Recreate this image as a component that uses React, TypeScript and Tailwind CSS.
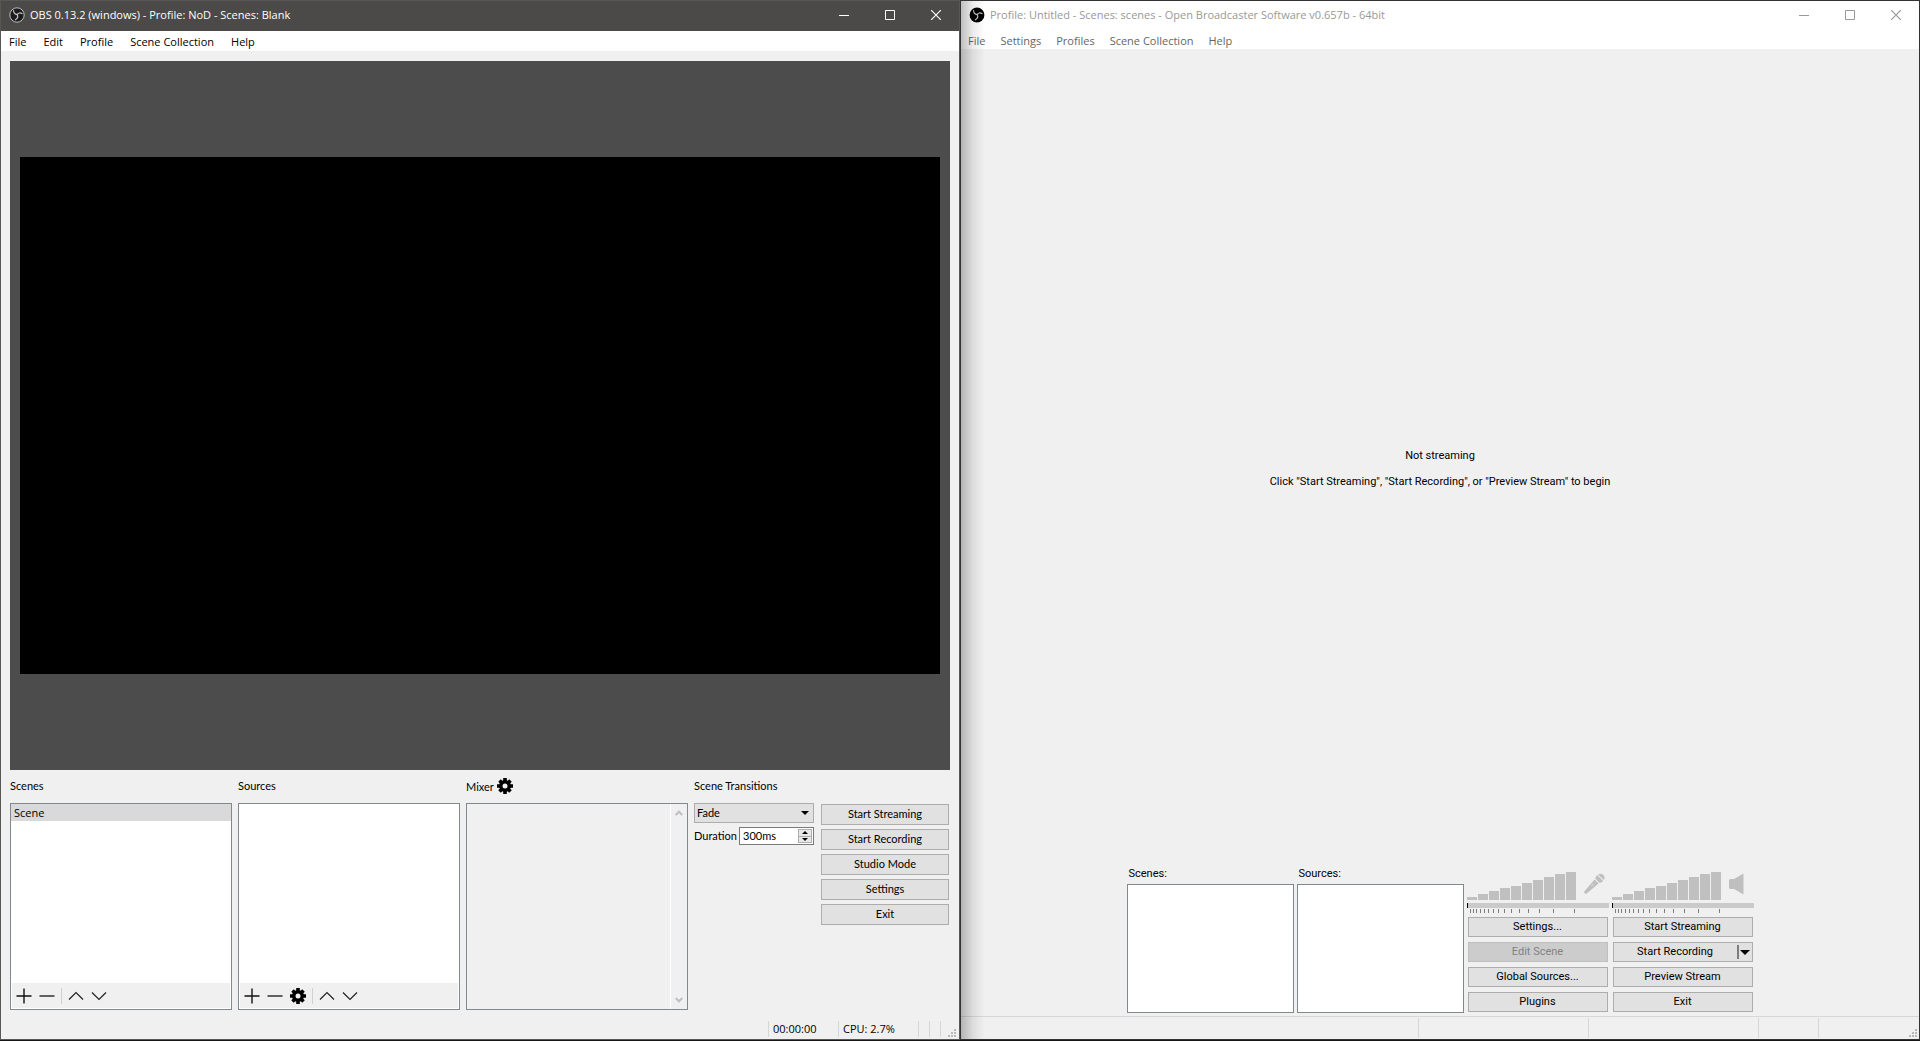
import React, { useState } from "react";
import clsx from "clsx";

const METER_BARS = [3, 6, 9, 12, 14, 17, 20, 23, 26, 28];
const METER_TICKS = [3, 6, 9, 13, 17, 21, 26, 31, 37, 44, 52, 61, 72, 86, 107];

/* ---------- icons ---------- */

const ObsLogo: React.FC<{ ring?: boolean }> = ({ ring }) => (
  <svg viewBox="0 0 16 16" className="size-4 shrink-0">
    <circle cx="8" cy="8" r="7.4" fill={ring ? "#1c1c1e" : "#000"} />
    {ring && (
      <circle cx="8" cy="8" r="7.2" fill="none" stroke="#c4c4c4" strokeWidth="1" />
    )}
    <g fill="none" stroke="#c4c4c4" strokeWidth="1.2" strokeLinecap="round">
      <path d="M8.2 7.6C6.2 7.4 4.6 6 4.6 3.6" />
      <path d="M8.2 7.6C9.2 5.8 11.2 5.4 13 6.6" />
      <path d="M8.2 7.6C9.2 9.6 8.6 11.6 6.4 12.8" />
    </g>
  </svg>
);

const GearIcon: React.FC = () => (
  <svg viewBox="0 0 16 16" className="size-4 shrink-0">
    <g stroke="#000" strokeWidth="3.6">
      <path d="M8 0v16M0 8h16" />
      <path d="M2.5 2.5l11 11M13.5 2.5l-11 11" />
    </g>
    <circle cx="8" cy="8" r="6" />
    <circle cx="8" cy="8" r="2.5" fill="#f0f0f0" />
  </svg>
);

const PlusIcon: React.FC = () => (
  <svg viewBox="0 0 16 16" className="size-4" stroke="#111" strokeWidth="1.4">
    <path d="M8 0.5v15M0.5 8h15" />
  </svg>
);

const MinusIcon: React.FC = () => (
  <svg viewBox="0 0 16 16" className="size-4" stroke="#222" strokeWidth="1.4">
    <path d="M0.5 8h15" />
  </svg>
);

const ChevronIcon: React.FC<{ down?: boolean }> = ({ down }) => (
  <svg viewBox="0 0 16 16" className="size-4" fill="none" stroke="#222" strokeWidth="1.2">
    <path d={down ? "M1 4.5l7 7 7-7" : "M1 11.5l7-7 7 7"} />
  </svg>
);

const ScrollArrow: React.FC<{ down?: boolean }> = ({ down }) => (
  <svg viewBox="0 0 8 8" className="size-2" fill="none" stroke="#bfbfbf" strokeWidth="2">
    <path d={down ? "M0.7 2l3.3 3.3L7.3 2" : "M0.7 6l3.3-3.3L7.3 6"} />
  </svg>
);

const Triangle: React.FC<{ up?: boolean; className: string }> = ({ up, className }) => (
  <svg viewBox="0 0 8 4" className={className}>
    <path d={up ? "M0 4L4 0l4 4z" : "M0 0h8L4 4z"} />
  </svg>
);

const MicIcon: React.FC = () => (
  <svg viewBox="0 0 21 21" className="size-[21px]" fill="#bfbfbf">
    <path d="M10.6 6.4l4 4.2L2.4 20.8 0.4 20.6 0.2 18.4z" />
    <path d="M11.4 5.8c0-1.500.7-2.800 1.800-3.800l6 6c-1.100 1.200-2.400 1.800-3.900 1.800z" />
    <path d="M14 1.400c1.800-1.200 4-.9 5.400.5s1.700 3.500.5 5.200z" />
    <path d="M7.600 12.800l1.400-1.500" stroke="#efefef" strokeWidth="1" />
  </svg>
);

const SpeakerIcon: React.FC = () => (
  <svg viewBox="0 0 15 22" className="h-[22px] w-[15px]" fill="#bfbfbf">
    <path d="M0 7.500Q0 6 1.500 6H5L14.500 0.500V21.500L5 16H1.500Q0 16 0 14.500z" />
  </svg>
);

const SizeGrip: React.FC = () => (
  <svg viewBox="0 0 8 8" className="size-2" fill="#b9b9b9">
    <path d="M6 0h2v2H6zM3 3h2v2H3zM6 3h2v2H6zM0 6h2v2H0zM3 6h2v2H3zM6 6h2v2H6z" />
  </svg>
);

/* ---------- window parts ---------- */

const WindowButtons: React.FC = () => (
  <div className="ml-auto flex self-stretch">
    <button aria-label="Minimize" className="flex w-[46px] items-center justify-center">
      <svg viewBox="0 0 10 10" className="size-2.5" stroke="currentColor">
        <path d="M0 5.500h10" />
      </svg>
    </button>
    <button aria-label="Maximize" className="flex w-[46px] items-center justify-center">
      <svg viewBox="0 0 10 10" className="size-2.5" fill="none" stroke="currentColor">
        <path d="M.5.500h9v9h-9z" />
      </svg>
    </button>
    <button aria-label="Close" className="flex w-[46px] items-center justify-center">
      <svg viewBox="0 0 10 10" className="size-2.5" stroke="currentColor" strokeWidth="1.200">
        <path d="M0 0l10 10M10 0L0 10" />
      </svg>
    </button>
  </div>
);

const PushButton: React.FC<{
  children: React.ReactNode;
  className?: string;
  disabled?: boolean;
}> = ({ children, className, disabled }) => (
  <button
    disabled={disabled}
    className={clsx(
      "flex w-full items-center justify-center border",
      disabled
        ? "border-[#bfbfbf] bg-[#cccccc] text-[#838383]"
        : "border-[#adadad] bg-[#e1e1e1] text-black",
      className
    )}
  >
    {children}
  </button>
);

const ListToolbar: React.FC<{ name: string; withGear?: boolean }> = ({ name, withGear }) => (
  <div className="m-px flex h-[25px] items-center gap-[7px] bg-[#f0f0f0] pl-1">
    <button aria-label={`Add ${name}`}>
      <PlusIcon />
    </button>
    <button aria-label={`Remove ${name}`}>
      <MinusIcon />
    </button>
    {withGear && (
      <button aria-label={`${name} properties`}>
        <GearIcon />
      </button>
    )}
    <span className="-mx-px h-4 w-px bg-[#d0d0d0]" />
    <button aria-label={`Move ${name} up`}>
      <ChevronIcon />
    </button>
    <button aria-label={`Move ${name} down`}>
      <ChevronIcon down />
    </button>
  </div>
);

const StudioWindow: React.FC = () => {
  const [duration, setDuration] = useState(300);

  return (
    <section className="flex min-w-0 flex-col border border-[#575757] bg-[#f0f0f0] text-black">
      <header className="flex h-[30px] items-center gap-[5px] bg-[#4b4a48] pb-0.5 pl-2 font-['Open_Sans',sans-serif] text-[11px] text-white">
        <ObsLogo ring />
        <h1>OBS 0.13.2 (windows) - Profile: NoD - Scenes: Blank</h1>
        <WindowButtons />
      </header>
      <nav className="flex h-5 items-center gap-[17px] bg-white pt-0.5 pl-2 font-['Open_Sans',sans-serif] text-[11px]">
        {["File", "Edit", "Profile", "Scene Collection", "Help"].map((item) => (
          <button key={item}>{item}</button>
        ))}
      </nav>

      <main className="flex flex-1 flex-col px-[9px] pt-2.5 font-[Lato,sans-serif] text-[11px]">
        {/* Preview */}
        <div className="flex flex-1 items-center bg-[#4c4c4c] px-2.5">
          <div className="aspect-video w-full bg-black" />
        </div>

        <div className="flex gap-1.5 pr-px">
          <div className="flex flex-1 flex-col">
            <h2 className="flex h-[33px] items-center">Scenes</h2>
            <div className="flex h-[207px] flex-col border border-[#828790] bg-white">
              <ul className="flex-1">
                <li className="h-[17px] bg-[#d9d9d9] pl-[3px] font-['Open_Sans',sans-serif] leading-[17px]">
                  Scene
                </li>
              </ul>
              <ListToolbar name="scene" />
            </div>
          </div>

          <div className="flex flex-1 flex-col">
            <h2 className="flex h-[33px] items-center">Sources</h2>
            <div className="flex h-[207px] flex-col border border-[#828790] bg-white">
              <ul className="flex-1" />
              <ListToolbar name="source" withGear />
            </div>
          </div>

          <div className="flex flex-1 flex-col">
            <div className="flex h-[33px] items-start gap-[3px]">
              <h2 className="leading-[33px]">Mixer</h2>
              <button aria-label="Mixer settings" className="pt-2">
                <GearIcon />
              </button>
            </div>
            <div className="flex h-[207px] justify-end border border-[#828790]">
              <div className="flex w-[17px] flex-col items-center justify-between border-l border-white py-[5px]">
                <ScrollArrow />
                <ScrollArrow down />
              </div>
            </div>
          </div>

          <div className="w-[120px]">
            <h2 className="flex h-[33px] items-center">Scene Transitions</h2>
            <div className="relative">
              <select
                aria-label="Scene transition"
                className="block h-5 w-full appearance-none border border-[#adadad] bg-[#e1e1e1] pl-0.5"
              >
                <option>Fade</option>
                <option>Cut</option>
              </select>
              <Triangle className="pointer-events-none absolute top-2 right-[5px] h-1 w-2" />
            </div>
            <div className="mt-1 flex items-center justify-between">
              <label htmlFor="duration">Duration</label>
              <div className="flex h-[18px] w-[75px] border border-[#7a7a7a] bg-white p-px">
                <input
                  id="duration"
                  value={`${duration}ms`}
                  onChange={(e) => setDuration(parseInt(e.target.value) || 0)}
                  className="w-0 flex-1 pl-0.5 outline-none"
                />
                <div className="flex w-3.5 flex-col border border-[#adadad] bg-[#e8e8e8]">
                  <button
                    aria-label="Increase duration"
                    onClick={() => setDuration(duration + 50)}
                    className="flex flex-1 items-center justify-center border-b border-[#adadad]"
                  >
                    <Triangle up className="h-[3px] w-1.5" />
                  </button>
                  <button
                    aria-label="Decrease duration"
                    onClick={() => setDuration(Math.max(0, duration - 50))}
                    className="flex flex-1 items-center justify-center"
                  >
                    <Triangle className="h-[3px] w-1.5" />
                  </button>
                </div>
              </div>
            </div>
          </div>

          <div className="ml-px flex w-[128px] flex-col gap-1 pt-[34px]">
            {["Start Streaming", "Start Recording", "Studio Mode", "Settings", "Exit"].map(
              (label) => (
                <PushButton key={label} className="h-[21px]">
                  {label}
                </PushButton>
              )
            )}
          </div>
        </div>
      </main>

      <footer className="flex h-[29px] items-center justify-end pt-2 pr-[3px] font-['Open_Sans',sans-serif] text-[11px]">
        <span className="h-4 w-[70px] border-l border-[#d7d7d7] pl-1 leading-4">00:00:00</span>
        <span className="h-4 w-20 border-l border-[#d7d7d7] pl-1 leading-4">CPU: 2.7%</span>
        <span className="h-4 w-[11px] border-l border-[#d7d7d7]" />
        <span className="h-4 w-[11px] border-l border-[#d7d7d7]" />
        <span className="h-4 w-2 border-l border-[#d7d7d7]" />
        <span className="self-end pb-0.5">
          <SizeGrip />
        </span>
      </footer>
    </section>
  );
};

const VolumeMeter: React.FC<{ label: string; icon: React.ReactNode }> = ({ label, icon }) => (
  <div className="h-[45px] w-[142px]">
    <div className="flex h-7 justify-between">
      <div className="flex items-end gap-px">
        {METER_BARS.map((height) => (
          <span key={height} className="w-2.5 bg-[#c0c0c0]" style={{ height }} />
        ))}
      </div>
      <button aria-label={label} className="flex w-[34px] justify-start pt-px pl-2">
        {icon}
      </button>
    </div>
    <div className="mt-[3px] h-[5px] border-l border-black bg-[#cacaca]" />
    <svg viewBox="0 0 142 5" className="block h-[5px] w-[142px]" stroke="#7d7d7d">
      {METER_TICKS.map((x) => (
        <path key={x} d={`M${x + 0.5} 1v4`} />
      ))}
    </svg>
  </div>
);

const ClassicWindow: React.FC = () => (
  <section className="relative flex min-w-0 flex-col border border-[#333333] bg-[#f0f0f0] text-black">
    <header className="flex h-[30px] items-center gap-[5px] bg-white pb-0.5 pl-2 font-['Open_Sans',sans-serif] text-[11px] text-[#999999]">
      <ObsLogo />
      <h1>Profile: Untitled - Scenes: scenes - Open Broadcaster Software v0.657b - 64bit</h1>
      <WindowButtons />
    </header>
    <nav className="flex h-[18px] items-center gap-[15px] bg-white pt-0.5 pl-[7px] font-['Open_Sans',sans-serif] text-[11px] text-[#666666]">
      {["File", "Settings", "Profiles", "Scene Collection", "Help"].map((item) => (
        <button key={item} className="leading-4">
          {item}
        </button>
      ))}
    </nav>

    <main className="flex flex-1 flex-col items-center font-[Roboto,sans-serif] text-[11px]">
      <div className="flex flex-1 flex-col items-center justify-center gap-2.5 pt-5 leading-4">
        <p>Not streaming</p>
        <p>Click "Start Streaming", "Start Recording", or "Preview Stream" to begin</p>
      </div>

      <div className="flex items-end gap-[3px] pb-[3px]">
        {["Scenes:", "Sources:"].map((title) => (
          <div key={title} className="w-[167px]">
            <h2 className="pb-1 pl-0.5 leading-3">{title}</h2>
            <div className="h-[129px] border border-[#828790] bg-white" />
          </div>
        ))}

        <div className="flex flex-col items-center">
          <VolumeMeter label="Mute microphone" icon={<MicIcon />} />
          <div className="flex w-[140px] flex-col gap-[5px] pb-px">
            <PushButton className="h-5">Settings...</PushButton>
            <PushButton className="h-5" disabled>
              Edit Scene
            </PushButton>
            <PushButton className="h-5">Global Sources...</PushButton>
            <PushButton className="h-5">Plugins</PushButton>
          </div>
        </div>

        <div className="flex flex-col items-center">
          <VolumeMeter label="Mute desktop audio" icon={<SpeakerIcon />} />
          <div className="flex w-[140px] flex-col gap-[5px] pb-px">
            <PushButton className="h-5">Start Streaming</PushButton>
            <div className="flex h-5 border border-[#adadad] bg-[#e1e1e1]">
              <button className="flex-1">Start Recording</button>
              <button
                aria-label="Recording options"
                className="my-0.5 flex items-center border-l-2 border-[#7d7d7d] pr-0.5 pl-px"
              >
                <Triangle className="h-[5px] w-2.5" />
              </button>
            </div>
            <PushButton className="h-5">Preview Stream</PushButton>
            <PushButton className="h-5">Exit</PushButton>
          </div>
        </div>
      </div>
    </main>

    <footer className="flex h-[23px] items-end justify-end border-t border-[#d7d7d7] pr-0.5 pb-px">
      <span className="h-5 w-[170px] border-l border-[#d7d7d7]" />
      <span className="h-5 w-[170px] border-l border-[#d7d7d7]" />
      <span className="h-5 w-[60px] border-l border-[#d7d7d7]" />
      <span className="flex h-5 w-[99px] items-end justify-end border-l border-[#d7d7d7] pb-px">
        <SizeGrip />
      </span>
    </footer>

    {/* Shadow cast by the active window */}
    <div className="pointer-events-none absolute inset-y-0 left-0 w-6 bg-linear-to-r from-black/25 via-black/8 to-transparent" />
  </section>
);

const App: React.FC = () => (
  <div className="grid min-h-screen grid-cols-2 bg-[#161616] pb-px">
    <StudioWindow />
    <ClassicWindow />
  </div>
);

export default App;
